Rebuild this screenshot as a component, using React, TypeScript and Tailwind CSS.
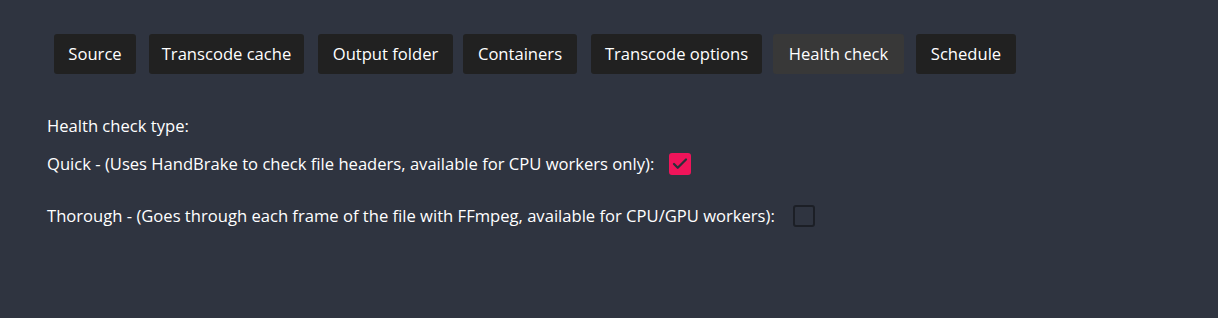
import { Check } from "lucide-react";

// widths and left gaps taken from the reference
const tabs = [
  { label: "Source", cls: "w-[82px]" },
  { label: "Transcode cache", cls: "w-[155px] ml-[13px]" },
  { label: "Output folder", cls: "w-[135px] ml-[14px]" },
  { label: "Containers", cls: "w-[114px] ml-[10px]" },
  { label: "Transcode options", cls: "w-[171px] ml-[14px]" },
  { label: "Health check", cls: "w-[131px] ml-[11px]" },
  { label: "Schedule", cls: "w-[100px] ml-[12px]" },
];

export default function App() {
  const active = "Health check";
  return (
    <div
      className="w-[1218px] h-[318px] bg-[#2f3440] text-white text-[16.6px]"
      style={{ fontFamily: '"Open Sans", "Noto Sans", sans-serif' }}
    >
      <div className="flex pt-[34px] pl-[54px]">
        {tabs.map((t) => (
          <button
            key={t.label}
            className={`h-10 rounded-[3px] whitespace-nowrap ${t.cls} ${
              t.label === active ? "bg-[#383838]" : "bg-[#212121]"
            }`}
          >
            {t.label}
          </button>
        ))}
      </div>

      <div className="pl-[47px] pt-[40px]">
        <div className="leading-6">Health check type:</div>
        <div className="flex items-center mt-[14px] h-6">
          <span>
            Quick - (Uses HandBrake to check file headers, available for CPU
            workers only):
          </span>
          <span className="ml-[15px] w-[22px] h-[22px] rounded-[3px] bg-[#f0145a] flex items-center justify-center">
            <Check className="w-[18px] h-[18px] text-[#2b2f3a]" strokeWidth={3} />
          </span>
        </div>
        <div className="flex items-center mt-[28px] h-6">
          <span>
            Thorough - (Goes through each frame of the file with FFmpeg,
            available for CPU/GPU workers):
          </span>
          <span className="ml-[18px] w-[22px] h-[22px] rounded-[3px] border-2 border-[#1c1f26]" />
        </div>
      </div>
    </div>
  );
}
